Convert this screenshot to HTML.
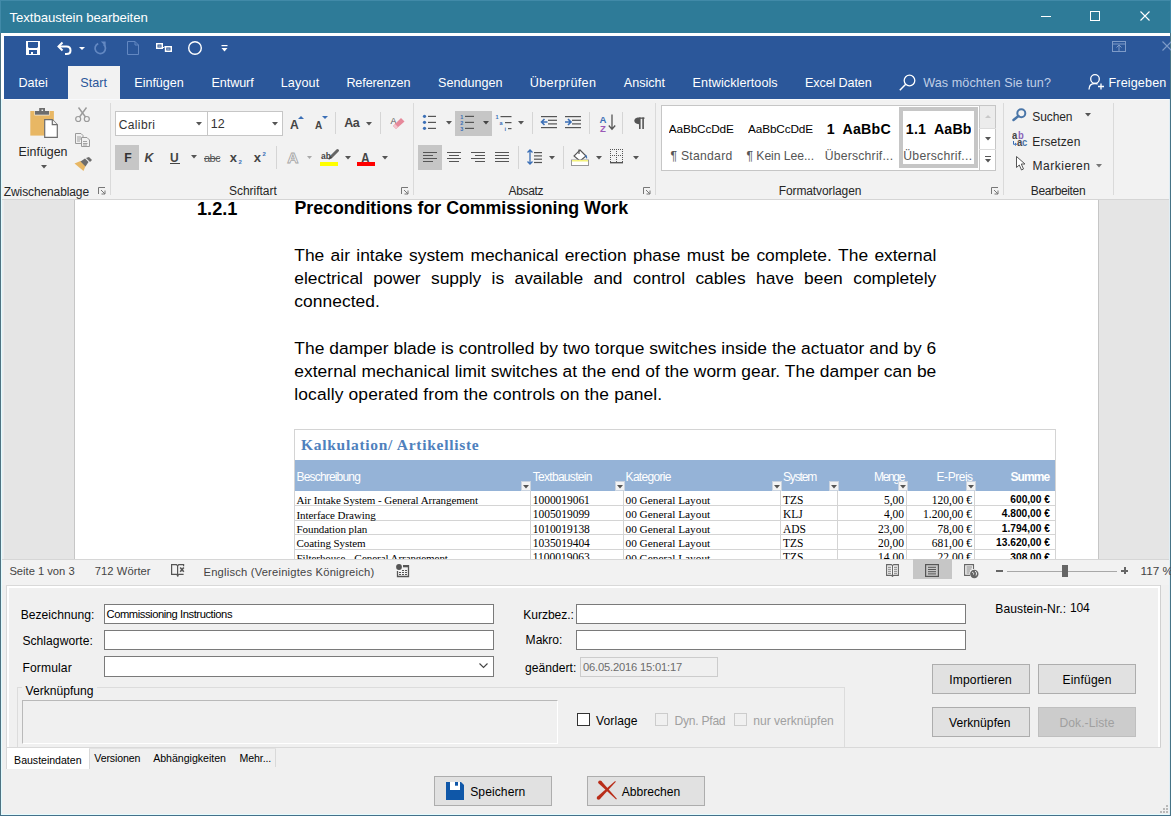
<!DOCTYPE html>
<html><head><meta charset="utf-8">
<style>
*{margin:0;padding:0;box-sizing:border-box}
html,body{width:1171px;height:816px;overflow:hidden;background:#f0f0f0;font-family:"Liberation Sans",sans-serif}
.a{position:absolute}
svg.a{overflow:visible}
.t{position:absolute;white-space:nowrap;line-height:1}
</style></head><body>
<div class="a" style="left:0px;top:0px;width:1171px;height:816px;background:#f0f0f0;"></div>
<div class="a" style="left:0px;top:0px;width:1171px;height:33px;background:#2e7b98;"></div>
<div class="a" style="left:0px;top:0px;width:1171px;height:1px;background:#418aa8;"></div>
<div class="a" style="left:0px;top:0px;width:1px;height:33px;background:#418aa8;"></div>
<div class="a" style="left:1170px;top:0px;width:1px;height:33px;background:#418aa8;"></div>
<div class="a" style="left:0px;top:33px;width:1px;height:783px;background:#4e7382;"></div>
<div class="a" style="left:1170px;top:33px;width:1px;height:783px;background:#467386;"></div>
<div class="a" style="left:0px;top:815px;width:1171px;height:1px;background:#44718a;"></div>
<div class="a" style="left:1px;top:814px;width:1169px;height:1px;background:#e4fcff;"></div>
<div class="a" style="left:1169px;top:36px;width:1px;height:779px;background:#e0eef5;"></div>
<div class="a" style="left:1px;top:33px;width:1169px;height:3px;background:#ffffff;"></div>
<div class="a" style="left:1px;top:36px;width:3px;height:63px;background:#ffffff;"></div>
<div class="a" style="left:1px;top:99px;width:1px;height:716px;background:#e0fbff;"></div>
<div class="t" style="left:9.6px;top:10.73px;font-size:13.2px;color:#fff;letter-spacing:-0.084px;">Textbaustein bearbeiten</div>
<div class="a" style="left:1041px;top:16px;width:10px;height:1px;background:#fff;"></div>
<div class="a" style="left:1090px;top:11px;width:10px;height:10px;border:1px solid #fff;"></div>
<svg class="a" style="left:1140px;top:11px;" width="10" height="10" viewBox="0 0 10 10"><path d="M0.5 0.5L9.5 9.5M9.5 0.5L0.5 9.5" stroke="#fff" stroke-width="1.1"/></svg>
<div class="a" style="left:4px;top:36px;width:1166px;height:63px;background:#2b579a;"></div>
<svg class="a" style="left:26px;top:41px;" width="14" height="14" viewBox="0 0 14 14"><rect x="0" y="0" width="14" height="14" fill="#fff"/><path d="M2 1H12V6L11 7H3L2 6Z" fill="#2b579a"/><rect x="3" y="9" width="8" height="4" fill="#2b579a"/><rect x="5" y="11" width="2" height="2" fill="#fff"/></svg>
<svg class="a" style="left:57px;top:41px;" width="15" height="14" viewBox="0 0 15 14"><path d="M2.5 5.5H9.5C12 5.5 13.5 7.3 13.5 9.5C13.5 11.7 12 13 9.5 13H8" fill="none" stroke="#fff" stroke-width="2"/><path d="M5.5 1.5L1.5 5.5L5.5 9.5" fill="none" stroke="#fff" stroke-width="2"/></svg>
<svg class="a" style="left:79px;top:47px;" width="6" height="3" viewBox="0 0 6 3"><path d="M0 0H6L3 3Z" fill="#fff"/></svg>
<svg class="a" style="left:94px;top:41px;" width="14" height="14" viewBox="0 0 14 14"><path d="M4.2 2.6A5.2 5.2 0 1 0 9.6 3.4" fill="none" stroke="#6388c2" stroke-width="1.7"/><path d="M6.8 0.6H11.6V5.2Z" fill="#6388c2"/></svg>
<svg class="a" style="left:127px;top:41px;" width="12" height="14" viewBox="0 0 12 14"><path d="M0.5 0.5H8L11.5 4V13.5H0.5Z" fill="none" stroke="#6388c2" stroke-width="1"/><path d="M8 0.5V4H11.5" fill="none" stroke="#6388c2" stroke-width="1"/></svg>
<svg class="a" style="left:156px;top:43px;" width="17" height="9" viewBox="0 0 17 9"><rect x="0" y="0" width="7" height="6" fill="#fff"/><rect x="1.5" y="1.5" width="4" height="3" fill="#274f8c"/><rect x="2.3" y="2.6" width="2.4" height="0.9" fill="#dfe7f3"/><rect x="8.8" y="3" width="7.2" height="6" fill="#fff"/><rect x="10.3" y="4.5" width="4.2" height="3" fill="#274f8c"/><rect x="11.1" y="5.6" width="2.6" height="0.9" fill="#dfe7f3"/><path d="M6.5 5L9.2 3.6" stroke="#fff" stroke-width="1"/></svg>
<svg class="a" style="left:188px;top:41px;" width="14" height="14" viewBox="0 0 14 14"><circle cx="7" cy="7" r="6.3" fill="none" stroke="#fff" stroke-width="1.4"/></svg>
<svg class="a" style="left:221px;top:45px;" width="7" height="7" viewBox="0 0 7 7"><rect x="0.5" y="0" width="6" height="1.2" fill="#fff"/><path d="M0.5 3H6.5L3.5 6.5Z" fill="#fff"/></svg>
<svg class="a" style="left:1112px;top:41px;" width="14" height="11" viewBox="0 0 14 11"><rect x="0.5" y="0.5" width="13" height="10" fill="none" stroke="#7e9bc8" stroke-width="1"/><path d="M0.5 3H13.5" stroke="#7e9bc8"/><path d="M7 4V10.5M4.5 6.5L7 4L9.5 6.5" fill="none" stroke="#7e9bc8"/></svg>
<svg class="a" style="left:1162px;top:41px;" width="10" height="10" viewBox="0 0 10 10"><path d="M0.5 0.5L9.5 9.5M9.5 0.5L0.5 9.5" stroke="#7e9bc8" stroke-width="1.1"/></svg>
<div class="a" style="left:68px;top:66px;width:52px;height:34px;background:#f2f2f2;"></div>
<div class="t" style="left:18.4px;top:77.03px;font-size:12.6px;color:#fff;letter-spacing:0.022px;">Datei</div>
<div class="t" style="left:80.2px;top:77.03px;font-size:12.6px;color:#2b579a;letter-spacing:0.041px;">Start</div>
<div class="t" style="left:134.3px;top:77.03px;font-size:12.6px;color:#fff;letter-spacing:-0.038px;">Einfügen</div>
<div class="t" style="left:211.4px;top:77.03px;font-size:12.6px;color:#fff;letter-spacing:-0.055px;">Entwurf</div>
<div class="t" style="left:280.7px;top:77.03px;font-size:12.6px;color:#fff;letter-spacing:0.151px;">Layout</div>
<div class="t" style="left:346.4px;top:77.03px;font-size:12.6px;color:#fff;letter-spacing:-0.118px;">Referenzen</div>
<div class="t" style="left:438.1px;top:77.03px;font-size:12.6px;color:#fff;letter-spacing:-0.012px;">Sendungen</div>
<div class="t" style="left:529.8px;top:77.03px;font-size:12.6px;color:#fff;letter-spacing:0.353px;">Überprüfen</div>
<div class="t" style="left:623.8px;top:77.03px;font-size:12.6px;color:#fff;letter-spacing:0.000px;">Ansicht</div>
<div class="t" style="left:692.6px;top:77.03px;font-size:12.6px;color:#fff;letter-spacing:0.075px;">Entwicklertools</div>
<div class="t" style="left:805.0px;top:77.03px;font-size:12.6px;color:#fff;letter-spacing:-0.117px;">Excel Daten</div>
<svg class="a" style="left:899px;top:74px;" width="17" height="17" viewBox="0 0 17 17"><circle cx="10.5" cy="6.5" r="5.3" fill="none" stroke="#fff" stroke-width="1.3"/><path d="M6.7 10.3L0.8 16.2" stroke="#fff" stroke-width="1.5"/></svg>
<div class="t" style="left:923.2px;top:77.03px;font-size:12.6px;color:#c0cfe6;letter-spacing:0.080px;">Was möchten Sie tun?</div>
<svg class="a" style="left:1088px;top:73px;" width="17" height="17" viewBox="0 0 17 17"><circle cx="7" cy="6" r="4.3" fill="none" stroke="#fff" stroke-width="1.3"/><path d="M1 16.5C1 12.5 3.5 10.5 7 10.5C8 10.5 9 10.7 9.7 11" fill="none" stroke="#fff" stroke-width="1.3"/><path d="M13 10.5V16.5M10 13.5H16" stroke="#fff" stroke-width="1.3"/></svg>
<div class="t" style="left:1108.5px;top:77.03px;font-size:12.6px;color:#fff;letter-spacing:0.136px;">Freigeben</div>
<div class="a" style="left:2px;top:99px;width:1167px;height:100px;background:#f2f2f2;"></div>
<div class="a" style="left:4px;top:99px;width:1165px;height:1px;background:#f8f9fb;"></div>
<div class="a" style="left:2px;top:199px;width:1167px;height:1px;background:#d5d5d5;"></div>
<div class="a" style="left:110px;top:103px;width:1px;height:92px;background:#dadada;"></div>
<div class="a" style="left:413px;top:103px;width:1px;height:92px;background:#dadada;"></div>
<div class="a" style="left:655px;top:103px;width:1px;height:92px;background:#dadada;"></div>
<div class="a" style="left:1003px;top:103px;width:1px;height:92px;background:#dadada;"></div>
<div class="a" style="left:1113px;top:103px;width:1px;height:92px;background:#dadada;"></div>
<svg class="a" style="left:30px;top:108px;" width="29" height="30" viewBox="0 0 29 30"><path d="M0.3 3H23.9V27.6H0.3Z" fill="#e8b764"/><rect x="4.5" y="2.2" width="15" height="5.2" fill="#f2f2f2"/><rect x="5" y="3" width="14" height="3.7" fill="#6d6d6d"/><rect x="9.2" y="0" width="5.8" height="4" fill="#6d6d6d"/><rect x="11.5" y="1.6" width="1.6" height="1.4" fill="#f2f2f2"/><path d="M14.7 11.7H22.3L27.3 16.7V29.3H14.7Z" fill="#fff" stroke="#6d6d6d" stroke-width="1.2"/><path d="M22.3 11.7V16.7H27.3" fill="#f2f2f2" stroke="#6d6d6d" stroke-width="1.2"/></svg>
<div class="t" style="left:18.5px;top:146.20px;font-size:12.4px;color:#262626;letter-spacing:0.012px;">Einfügen</div>
<svg class="a" style="left:41px;top:165px;" width="6" height="4" viewBox="0 0 6 4"><path d="M0 0H6L3 3.5Z" fill="#555"/></svg>
<svg class="a" style="left:75px;top:107px;" width="15" height="15" viewBox="0 0 15 15"><path d="M3.5 0.5L10.5 10M11.5 0.5L4.5 10" stroke="#9a9a9a" stroke-width="1.4"/><circle cx="3.2" cy="12" r="2.5" fill="none" stroke="#9a9a9a" stroke-width="1.2"/><circle cx="11.8" cy="12" r="2.5" fill="none" stroke="#9a9a9a" stroke-width="1.2"/></svg>
<svg class="a" style="left:75px;top:133px;" width="15" height="14" viewBox="0 0 15 14"><path d="M0.5 0.5H6L8 2.5V10.5H0.5Z" fill="#f1f1f1" stroke="#9a9a9a"/><path d="M6.5 4.5H12L14.5 7V13.5H6.5Z" fill="#f1f1f1" stroke="#9a9a9a"/><path d="M2 4H6M2 6H6M2 8H5M8 8.5H12M8 10.5H12.5M8 12H12" stroke="#9a9a9a" stroke-width="0.9"/></svg>
<svg class="a" style="left:75px;top:157px;" width="17" height="15" viewBox="0 0 17 15"><path d="M0 7.5L6 5L11 10L9 15Z" fill="#e8b764" transform="translate(-0.5,-1)"/><path d="M5.5 4.5L10 1.5L13.5 5L10.5 9.5Z" fill="#6d6d6d"/><path d="M11 1L14 0L17 3L15 5Z" fill="#6d6d6d"/></svg>
<div class="t" style="left:3.8px;top:185.54px;font-size:12px;color:#262626;letter-spacing:-0.108px;">Zwischenablage</div>
<svg class="a" style="left:98px;top:187px;" width="8" height="8" viewBox="0 0 8 8"><path d="M0.5 7V0.5H7" fill="none" stroke="#777"/><path d="M3 3L7 7M7 3.5V7H3.5" fill="none" stroke="#777"/></svg>
<div class="a" style="left:115px;top:111px;width:168px;height:25px;background:#fff;border:1px solid #c6c6c6;"></div>
<div class="a" style="left:207px;top:111px;width:1px;height:25px;background:#c6c6c6;"></div>
<div class="t" style="left:118.8px;top:118.84px;font-size:12px;color:#333;letter-spacing:0.353px;">Calibri</div>
<div class="t" style="left:210.8px;top:118.42px;font-size:12.5px;color:#333;">12</div>
<svg class="a" style="left:196px;top:122px;" width="6" height="4" viewBox="0 0 6 4"><path d="M0 0H6L3 3.5Z" fill="#555"/></svg>
<svg class="a" style="left:272px;top:122px;" width="6" height="4" viewBox="0 0 6 4"><path d="M0 0H6L3 3.5Z" fill="#555"/></svg>
<div class="t" style="left:290.0px;top:118.27px;font-size:13.5px;color:#444;font-weight:bold;transform:scaleX(0.9);transform-origin:left;">A</div>
<svg class="a" style="left:298px;top:116px;" width="6" height="3" viewBox="0 0 6 3"><path d="M0 3H6L3 0Z" fill="#3b6fb6"/></svg>
<div class="t" style="left:315.0px;top:121.23px;font-size:10px;color:#444;font-weight:bold;">A</div>
<svg class="a" style="left:322px;top:116px;" width="6" height="3" viewBox="0 0 6 3"><path d="M0 0H6L3 3Z" fill="#3b6fb6"/></svg>
<div class="a" style="left:335px;top:112px;width:1px;height:22px;background:#d5d5d5;"></div>
<div class="t" style="left:344.2px;top:117.12px;font-size:12.5px;color:#444;font-weight:bold;letter-spacing:-0.492px;">Aa</div>
<svg class="a" style="left:366px;top:122px;" width="6" height="3.5" viewBox="0 0 6 3.5"><path d="M0 0H6L3 3.5Z" fill="#555"/></svg>
<div class="a" style="left:380px;top:112px;width:1px;height:22px;background:#d5d5d5;"></div>
<div class="t" style="left:390.5px;top:117.08px;font-size:9px;color:#555;">A</div>
<svg class="a" style="left:392px;top:116px;" width="14" height="14" viewBox="0 0 14 14"><path d="M4 13L1 10L9 2L12.5 5.5Z" fill="#e6889a" transform="translate(0,0)"/><path d="M1 10L4 13L6 11L3 8Z" fill="#f3c3cc"/></svg>
<div class="a" style="left:115px;top:145px;width:24px;height:25px;background:#c6c6c6;"></div>
<div class="t" style="left:124.2px;top:151.57px;font-size:12.2px;color:#333;font-weight:bold;">F</div>
<div class="t" style="left:144.5px;top:151.57px;font-size:12.2px;color:#444;font-weight:bold;font-style:italic;">K</div>
<div class="t" style="left:170.0px;top:151.74px;font-size:12px;color:#444;font-weight:bold;">U</div>
<div class="a" style="left:170px;top:162.5px;width:9.5px;height:1.3px;background:#444;"></div>
<svg class="a" style="left:191px;top:155px;" width="6" height="3.5" viewBox="0 0 6 3.5"><path d="M0 0H6L3 3.5Z" fill="#555"/></svg>
<div class="t" style="left:204.0px;top:152.59px;font-size:11px;color:#555;letter-spacing:-0.517px;">abc</div>
<div class="a" style="left:204px;top:157.5px;width:16px;height:1px;background:#555;"></div>
<div class="t" style="left:229.8px;top:150.90px;font-size:13px;color:#444;font-weight:bold;">x</div>
<div class="t" style="left:238.5px;top:158.62px;font-size:6px;color:#3b6fb6;font-weight:bold;">2</div>
<div class="t" style="left:253.8px;top:150.90px;font-size:13px;color:#444;font-weight:bold;">x</div>
<div class="t" style="left:262.5px;top:150.62px;font-size:6px;color:#3b6fb6;font-weight:bold;">2</div>
<div class="a" style="left:276px;top:146px;width:1px;height:23px;background:#d5d5d5;"></div>
<div class="t" style="left:287.2px;top:150.08px;font-size:15.5px;color:#fafafa;font-weight:bold;-webkit-text-stroke:0.9px #a8a8a8;">A</div>
<svg class="a" style="left:307px;top:156px;" width="5" height="3" viewBox="0 0 5 3"><path d="M0 0H5L2.5 3Z" fill="#aaa"/></svg>
<div class="t" style="left:321.0px;top:152.00px;font-size:8.5px;color:#444;font-weight:bold;">ab</div>
<svg class="a" style="left:327px;top:149px;" width="12" height="12" viewBox="0 0 12 12"><path d="M10.5 1.5L4 8" stroke="#666" stroke-width="3" stroke-linecap="round" fill="none"/><path d="M3.2 7L5 8.8L1.5 11Z" fill="#444"/></svg>
<div class="a" style="left:320px;top:162px;width:18px;height:4px;background:#ffff00;"></div>
<svg class="a" style="left:345px;top:155.5px;" width="6" height="3.5" viewBox="0 0 6 3.5"><path d="M0 0H6L3 3.5Z" fill="#555"/></svg>
<div class="t" style="left:361.0px;top:150.68px;font-size:14.2px;color:#444;font-weight:bold;transform:scaleX(0.85);transform-origin:left;">A</div>
<div class="a" style="left:357px;top:162px;width:18px;height:4px;background:#ff0000;"></div>
<svg class="a" style="left:382px;top:155.5px;" width="6" height="3.5" viewBox="0 0 6 3.5"><path d="M0 0H6L3 3.5Z" fill="#555"/></svg>
<div class="t" style="left:229.0px;top:185.04px;font-size:12px;color:#262626;letter-spacing:-0.030px;">Schriftart</div>
<svg class="a" style="left:401px;top:187px;" width="8" height="8" viewBox="0 0 8 8"><path d="M0.5 7V0.5H7" fill="none" stroke="#777"/><path d="M3 3L7 7M7 3.5V7H3.5" fill="none" stroke="#777"/></svg>
<svg class="a" style="left:422px;top:114px;" width="16" height="17" viewBox="0 0 16 17"><circle cx="2.5" cy="2.3" r="1.6" fill="#3b6fb6"/><rect x="6" y="1.8" width="8" height="1.2" fill="#555"/><circle cx="2.5" cy="8.3" r="1.6" fill="#3b6fb6"/><rect x="6" y="7.8" width="8" height="1.2" fill="#555"/><circle cx="2.5" cy="14.3" r="1.6" fill="#3b6fb6"/><rect x="6" y="13.8" width="8" height="1.2" fill="#555"/></svg>
<svg class="a" style="left:446px;top:121px;" width="6" height="3.5" viewBox="0 0 6 3.5"><path d="M0 0H6L3 3.5Z" fill="#555"/></svg>
<div class="a" style="left:455px;top:111px;width:37px;height:25px;background:#c6c6c6;"></div>
<svg class="a" style="left:459px;top:114px;" width="17" height="17" viewBox="0 0 17 17"><text x="1.3" y="4.8" font-size="5.5" font-weight="bold" fill="#3b6fb6" font-family="Liberation Sans">1</text><rect x="6" y="1.8" width="9" height="1.2" fill="#555"/><text x="1.3" y="10.8" font-size="5.5" font-weight="bold" fill="#3b6fb6" font-family="Liberation Sans">2</text><rect x="6" y="7.8" width="9" height="1.2" fill="#555"/><text x="1.3" y="16.8" font-size="5.5" font-weight="bold" fill="#3b6fb6" font-family="Liberation Sans">3</text><rect x="6" y="13.8" width="9" height="1.2" fill="#555"/></svg>
<svg class="a" style="left:483px;top:121px;" width="6" height="3.5" viewBox="0 0 6 3.5"><path d="M0 0H6L3 3.5Z" fill="#444"/></svg>
<svg class="a" style="left:495px;top:114px;" width="18" height="17" viewBox="0 0 18 17"><text x="0.5" y="4.8" font-size="5.5" font-weight="bold" fill="#3b6fb6" font-family="Liberation Sans">1</text><rect x="5.5" y="2" width="11" height="1.2" fill="#555"/><text x="4.5" y="10.5" font-size="5.5" font-weight="bold" fill="#3b6fb6" font-family="Liberation Sans">a</text><rect x="10" y="8" width="6.5" height="1.2" fill="#555"/><text x="9.5" y="16.5" font-size="5.5" font-weight="bold" fill="#3b6fb6" font-family="Liberation Sans">i</text><rect x="13" y="14" width="3.5" height="1.2" fill="#555"/></svg>
<svg class="a" style="left:518px;top:121px;" width="6" height="3.5" viewBox="0 0 6 3.5"><path d="M0 0H6L3 3.5Z" fill="#555"/></svg>
<div class="a" style="left:532px;top:112px;width:1px;height:22px;background:#d5d5d5;"></div>
<svg class="a" style="left:541px;top:116px;" width="17" height="13" viewBox="0 0 17 13"><rect x="0" y="0" width="16" height="1.2" fill="#555"/><rect x="7" y="3.7" width="9" height="1.2" fill="#555"/><rect x="7" y="7.3" width="9" height="1.2" fill="#555"/><rect x="0" y="11" width="16" height="1.2" fill="#555"/><path d="M0.5 6H6.5M3.5 3L0.5 6L3.5 9" stroke="#3b6fb6" stroke-width="1.6" fill="none"/></svg>
<svg class="a" style="left:565px;top:116px;" width="17" height="13" viewBox="0 0 17 13"><rect x="0" y="0" width="16" height="1.2" fill="#555"/><rect x="7" y="3.7" width="9" height="1.2" fill="#555"/><rect x="7" y="7.3" width="9" height="1.2" fill="#555"/><rect x="0" y="11" width="16" height="1.2" fill="#555"/><path d="M0 6H6M3 3L6 6L3 9" stroke="#3b6fb6" stroke-width="1.6" fill="none"/></svg>
<div class="a" style="left:589px;top:112px;width:1px;height:22px;background:#d5d5d5;"></div>
<div class="t" style="left:599.5px;top:114.87px;font-size:9.6px;color:#3b6fb6;font-weight:bold;">A</div>
<div class="t" style="left:600.0px;top:123.57px;font-size:9.6px;color:#9b59b6;font-weight:bold;">Z</div>
<svg class="a" style="left:608px;top:114px;" width="8" height="17" viewBox="0 0 8 17"><path d="M4 0.5V15M0.8 11.5L4 15.2L7.2 11.5" stroke="#555" stroke-width="1.3" fill="none"/></svg>
<div class="a" style="left:622px;top:112px;width:1px;height:22px;background:#d5d5d5;"></div>
<svg class="a" style="left:634px;top:117px;" width="11" height="12" viewBox="0 0 11 12"><path d="M5 0.5H10.5V1.8H5Z" fill="#555"/><path d="M5 0.5C1.5 0.5 0.3 2.3 0.3 3.8C0.3 5.5 1.6 7.2 5 7.2Z" fill="#555"/><rect x="5" y="0.5" width="1.6" height="11.5" fill="#555"/><rect x="8.3" y="0.5" width="1.6" height="11.5" fill="#555"/></svg>
<div class="a" style="left:418px;top:145px;width:24px;height:25px;background:#c6c6c6;"></div>
<div class="a" style="left:423px;top:152px;width:14px;height:1.2px;background:#555;"></div>
<div class="a" style="left:423px;top:155px;width:10px;height:1.2px;background:#555;"></div>
<div class="a" style="left:423px;top:158px;width:14px;height:1.2px;background:#555;"></div>
<div class="a" style="left:423px;top:161px;width:10px;height:1.2px;background:#555;"></div>
<div class="a" style="left:447px;top:152px;width:14px;height:1.2px;background:#555;"></div>
<div class="a" style="left:449px;top:155px;width:10px;height:1.2px;background:#555;"></div>
<div class="a" style="left:447px;top:158px;width:14px;height:1.2px;background:#555;"></div>
<div class="a" style="left:449px;top:161px;width:10px;height:1.2px;background:#555;"></div>
<div class="a" style="left:471px;top:152px;width:14px;height:1.2px;background:#555;"></div>
<div class="a" style="left:475px;top:155px;width:10px;height:1.2px;background:#555;"></div>
<div class="a" style="left:471px;top:158px;width:14px;height:1.2px;background:#555;"></div>
<div class="a" style="left:475px;top:161px;width:10px;height:1.2px;background:#555;"></div>
<div class="a" style="left:495px;top:152px;width:14px;height:1.2px;background:#555;"></div>
<div class="a" style="left:495px;top:155px;width:14px;height:1.2px;background:#555;"></div>
<div class="a" style="left:495px;top:158px;width:14px;height:1.2px;background:#555;"></div>
<div class="a" style="left:495px;top:161px;width:14px;height:1.2px;background:#555;"></div>
<div class="a" style="left:518px;top:146px;width:1px;height:23px;background:#d5d5d5;"></div>
<svg class="a" style="left:527px;top:149px;" width="16" height="17" viewBox="0 0 16 17"><path d="M3 1V15M0.5 3.5L3 1L5.5 3.5M0.5 12.5L3 15L5.5 12.5" stroke="#3b6fb6" stroke-width="1.3" fill="none"/><rect x="7" y="3" width="8" height="1.2" fill="#555"/><rect x="7" y="6.3" width="8" height="1.2" fill="#555"/><rect x="7" y="9.6" width="8" height="1.2" fill="#555"/><rect x="7" y="12.9" width="8" height="1.2" fill="#555"/></svg>
<svg class="a" style="left:549px;top:156px;" width="6" height="3.5" viewBox="0 0 6 3.5"><path d="M0 0H6L3 3.5Z" fill="#555"/></svg>
<div class="a" style="left:563px;top:146px;width:1px;height:23px;background:#d5d5d5;"></div>
<svg class="a" style="left:571px;top:149px;" width="18" height="17" viewBox="0 0 18 17"><path d="M9 1L15 7L9 12L3 7Z" fill="#fff" stroke="#555" stroke-width="1.1"/><path d="M8 0.5V5" stroke="#555" stroke-width="1.2"/><path d="M14 5.5C16 6 16.5 8 16 10L14.5 8Z" fill="#3b6fb6"/><rect x="0.5" y="11" width="17" height="5.5" fill="#fff" stroke="#999" stroke-width="1"/><rect x="1" y="11" width="16" height="1.5" fill="#f3f17a"/></svg>
<svg class="a" style="left:596px;top:156px;" width="6" height="3.5" viewBox="0 0 6 3.5"><path d="M0 0H6L3 3.5Z" fill="#555"/></svg>
<svg class="a" style="left:610px;top:149px;" width="13" height="15" viewBox="0 0 13 15"><rect x="0" y="0" width="1" height="1" fill="#555"/><rect x="6" y="0" width="1" height="1" fill="#555"/><rect x="12" y="0" width="1" height="1" fill="#555"/><rect x="0" y="2" width="1" height="1" fill="#555"/><rect x="6" y="2" width="1" height="1" fill="#555"/><rect x="12" y="2" width="1" height="1" fill="#555"/><rect x="0" y="4" width="1" height="1" fill="#555"/><rect x="6" y="4" width="1" height="1" fill="#555"/><rect x="12" y="4" width="1" height="1" fill="#555"/><rect x="0" y="6" width="1" height="1" fill="#555"/><rect x="6" y="6" width="1" height="1" fill="#555"/><rect x="12" y="6" width="1" height="1" fill="#555"/><rect x="0" y="8" width="1" height="1" fill="#555"/><rect x="6" y="8" width="1" height="1" fill="#555"/><rect x="12" y="8" width="1" height="1" fill="#555"/><rect x="0" y="10" width="1" height="1" fill="#555"/><rect x="6" y="10" width="1" height="1" fill="#555"/><rect x="12" y="10" width="1" height="1" fill="#555"/><rect x="0" y="12" width="1" height="1" fill="#555"/><rect x="6" y="12" width="1" height="1" fill="#555"/><rect x="12" y="12" width="1" height="1" fill="#555"/><rect x="2" y="0" width="1" height="1" fill="#555"/><rect x="4" y="0" width="1" height="1" fill="#555"/><rect x="8" y="0" width="1" height="1" fill="#555"/><rect x="10" y="0" width="1" height="1" fill="#555"/><rect x="2" y="6" width="1" height="1" fill="#555"/><rect x="4" y="6" width="1" height="1" fill="#555"/><rect x="8" y="6" width="1" height="1" fill="#555"/><rect x="10" y="6" width="1" height="1" fill="#555"/><rect x="0" y="13" width="13" height="1.4" fill="#555"/></svg>
<svg class="a" style="left:633px;top:156px;" width="6" height="3.5" viewBox="0 0 6 3.5"><path d="M0 0H6L3 3.5Z" fill="#555"/></svg>
<div class="t" style="left:508.6px;top:185.04px;font-size:12px;color:#262626;letter-spacing:-0.379px;">Absatz</div>
<svg class="a" style="left:643px;top:187px;" width="8" height="8" viewBox="0 0 8 8"><path d="M0.5 7V0.5H7" fill="none" stroke="#777"/><path d="M3 3L7 7M7 3.5V7H3.5" fill="none" stroke="#777"/></svg>
<div class="a" style="left:661px;top:105px;width:335px;height:66px;background:#fff;border:1px solid #c6c6c6;"></div>
<div class="t" style="left:668.8px;top:123.71px;font-size:11.8px;color:#000;letter-spacing:-0.139px;width:65px;overflow:hidden;">AaBbCcDdE</div>
<div class="t" style="left:670.4px;top:149.87px;font-size:12.2px;color:#555;letter-spacing:0.278px;">¶ Standard</div>
<div class="t" style="left:748.0px;top:123.71px;font-size:11.8px;color:#000;letter-spacing:-0.139px;width:65px;overflow:hidden;">AaBbCcDdE</div>
<div class="t" style="left:746.5px;top:149.87px;font-size:12.2px;color:#555;letter-spacing:-0.056px;">¶ Kein Lee...</div>
<div class="t" style="left:826.7px;top:122.48px;font-size:14.2px;color:#000;font-weight:bold;letter-spacing:0.2px;">1&nbsp; AaBbC</div>
<div class="t" style="left:824.7px;top:149.87px;font-size:12.2px;color:#555;letter-spacing:0.222px;">Überschrif...</div>
<div class="a" style="left:899px;top:107px;width:79px;height:61px;background:#fff;border:4px solid #c6c6c6;"></div>
<div class="t" style="left:905.8px;top:122.48px;font-size:14.2px;color:#000;font-weight:bold;width:65px;overflow:hidden;letter-spacing:0.2px;">1.1&nbsp; AaBb</div>
<div class="t" style="left:903.3px;top:149.87px;font-size:12.2px;color:#555;letter-spacing:0.252px;">Überschrif...</div>
<div class="a" style="left:979px;top:105px;width:17px;height:66px;background:#fff;border:1px solid #c6c6c6;"></div>
<div class="a" style="left:980px;top:106px;width:15px;height:22px;background:#ececec;"></div>
<div class="a" style="left:979px;top:128px;width:17px;height:1px;background:#dcdcdc;"></div>
<div class="a" style="left:979px;top:149px;width:17px;height:1px;background:#dcdcdc;"></div>
<svg class="a" style="left:985px;top:115px;" width="6" height="3" viewBox="0 0 6 3"><path d="M0 3H6L3 0Z" fill="#c8c8c8"/></svg>
<svg class="a" style="left:985px;top:137px;" width="6" height="3.5" viewBox="0 0 6 3.5"><path d="M0 0H6L3 3.5Z" fill="#555"/></svg>
<div class="a" style="left:985px;top:156px;width:6px;height:1px;background:#555;"></div>
<svg class="a" style="left:985px;top:159px;" width="6" height="3.5" viewBox="0 0 6 3.5"><path d="M0 0H6L3 3.5Z" fill="#555"/></svg>
<div class="t" style="left:778.7px;top:185.04px;font-size:12px;color:#262626;letter-spacing:-0.102px;">Formatvorlagen</div>
<svg class="a" style="left:991px;top:187px;" width="8" height="8" viewBox="0 0 8 8"><path d="M0.5 7V0.5H7" fill="none" stroke="#777"/><path d="M3 3L7 7M7 3.5V7H3.5" fill="none" stroke="#777"/></svg>
<svg class="a" style="left:1012px;top:108px;" width="15" height="13" viewBox="0 0 15 13"><circle cx="9.3" cy="5.3" r="4" fill="none" stroke="#4a76a8" stroke-width="2"/><path d="M6.5 8L1.5 12" stroke="#4a76a8" stroke-width="2.5" stroke-linecap="round"/></svg>
<div class="t" style="left:1032.3px;top:110.54px;font-size:12px;color:#262626;letter-spacing:-0.098px;">Suchen</div>
<svg class="a" style="left:1085px;top:113px;" width="6" height="3.5" viewBox="0 0 6 3.5"><path d="M0 0H6L3 3.5Z" fill="#555"/></svg>
<div class="t" style="left:1011.8px;top:130.41px;font-size:10.5px;color:#444;font-weight:bold;transform:scaleX(0.9);transform-origin:left;">a</div>
<div class="t" style="left:1017.8px;top:130.41px;font-size:10.5px;color:#8a63b8;font-weight:bold;transform:scaleX(0.9);transform-origin:left;">b</div>
<div class="t" style="left:1017.0px;top:137.41px;font-size:10.5px;color:#444;font-weight:bold;transform:scaleX(0.9);transform-origin:left;">a</div>
<div class="t" style="left:1022.3px;top:137.41px;font-size:10.5px;color:#4a76a8;font-weight:bold;transform:scaleX(0.9);transform-origin:left;">c</div>
<svg class="a" style="left:1012px;top:141px;" width="5" height="5" viewBox="0 0 5 5"><path d="M1.5 0V3.3H4.5M3 2L4.5 3.3L3 4.6" stroke="#3b6fb6" stroke-width="1" fill="none"/></svg>
<div class="t" style="left:1032.3px;top:135.54px;font-size:12px;color:#262626;letter-spacing:0.095px;">Ersetzen</div>
<svg class="a" style="left:1016px;top:156px;" width="10" height="15" viewBox="0 0 10 15"><path d="M0.5 0.5V11.5L3.3 9L5.5 14L7.5 13L5.3 8H9Z" fill="#fff" stroke="#555" stroke-width="1"/></svg>
<div class="t" style="left:1032.6px;top:160.04px;font-size:12px;color:#262626;letter-spacing:0.493px;">Markieren</div>
<svg class="a" style="left:1096px;top:163.5px;" width="6" height="3.5" viewBox="0 0 6 3.5"><path d="M0 0H6L3 3.5Z" fill="#777"/></svg>
<div class="t" style="left:1030.8px;top:185.04px;font-size:12px;color:#262626;letter-spacing:-0.363px;">Bearbeiten</div>
<div class="a" style="left:2px;top:200px;width:2px;height:359px;background:#ececee;"></div>
<div class="a" style="left:4px;top:200px;width:1165px;height:359px;background:#e5e5e5;"></div>
<div class="a" style="left:74px;top:200px;width:1025px;height:359px;background:#fff;"></div>
<div class="a" style="left:74px;top:200px;width:1px;height:359px;background:#c6c6c6;"></div>
<div class="a" style="left:1098px;top:200px;width:1px;height:359px;background:#c6c6c6;"></div>
<div class="t" style="left:196.9px;top:199.99px;font-size:18.2px;color:#000;font-weight:bold;letter-spacing:0.036px;">1.2.1</div>
<div class="t" style="left:294.5px;top:200.33px;font-size:17.8px;color:#000;font-weight:bold;letter-spacing:-0.028px;">Preconditions for Commissioning Work</div>
<div class="t" style="left:294.3px;top:246.87px;font-size:17.4px;color:#000;">The</div>
<div class="t" style="left:330.6px;top:246.87px;font-size:17.4px;color:#000;">air</div>
<div class="t" style="left:356.3px;top:246.87px;font-size:17.4px;color:#000;">intake</div>
<div class="t" style="left:409.0px;top:246.87px;font-size:17.4px;color:#000;">system</div>
<div class="t" style="left:470.4px;top:246.87px;font-size:17.4px;color:#000;">mechanical</div>
<div class="t" style="left:564.7px;top:246.87px;font-size:17.4px;color:#000;">erection</div>
<div class="t" style="left:633.0px;top:246.87px;font-size:17.4px;color:#000;">phase</div>
<div class="t" style="left:686.7px;top:246.87px;font-size:17.4px;color:#000;">must</div>
<div class="t" style="left:730.7px;top:246.87px;font-size:17.4px;color:#000;">be</div>
<div class="t" style="left:756.4px;top:246.87px;font-size:17.4px;color:#000;">complete.</div>
<div class="t" style="left:838.1px;top:246.87px;font-size:17.4px;color:#000;">The</div>
<div class="t" style="left:874.4px;top:246.87px;font-size:17.4px;color:#000;">external</div>
<div class="t" style="left:294.3px;top:269.57px;font-size:17.4px;color:#000;">electrical</div>
<div class="t" style="left:373.3px;top:269.57px;font-size:17.4px;color:#000;">power</div>
<div class="t" style="left:431.0px;top:269.57px;font-size:17.4px;color:#000;">supply</div>
<div class="t" style="left:491.6px;top:269.57px;font-size:17.4px;color:#000;">is</div>
<div class="t" style="left:514.5px;top:269.57px;font-size:17.4px;color:#000;">available</div>
<div class="t" style="left:593.5px;top:269.57px;font-size:17.4px;color:#000;">and</div>
<div class="t" style="left:632.9px;top:269.57px;font-size:17.4px;color:#000;">control</div>
<div class="t" style="left:695.4px;top:269.57px;font-size:17.4px;color:#000;">cables</div>
<div class="t" style="left:756.1px;top:269.57px;font-size:17.4px;color:#000;">have</div>
<div class="t" style="left:804.1px;top:269.57px;font-size:17.4px;color:#000;">been</div>
<div class="t" style="left:853.2px;top:269.57px;font-size:17.4px;color:#000;">completely</div>
<div class="t" style="left:294.3px;top:293.17px;font-size:17.4px;color:#000;letter-spacing:0.053px;">connected.</div>
<div class="t" style="left:294.3px;top:339.87px;font-size:17.4px;color:#000;letter-spacing:0.049px;">The damper blade is controlled by two torque switches inside the actuator and by 6</div>
<div class="t" style="left:294.3px;top:362.77px;font-size:17.4px;color:#000;letter-spacing:0.042px;">external mechanical limit switches at the end of the worm gear. The damper can be</div>
<div class="t" style="left:294.3px;top:385.77px;font-size:17.4px;color:#000;letter-spacing:0.135px;">locally operated from the controls on the panel.</div>
<div class="a" style="left:294px;top:429px;width:762px;height:130px;background:#fff;"></div>
<div class="a" style="left:294px;top:429px;width:762px;height:1px;background:#d4d4d4;"></div>
<div class="a" style="left:294px;top:429px;width:1px;height:130px;background:#d4d4d4;"></div>
<div class="a" style="left:1055px;top:429px;width:1px;height:130px;background:#d4d4d4;"></div>
<div class="t" style="left:301.0px;top:437.38px;font-size:15.5px;color:#4f81bd;font-weight:bold;font-family:'Liberation Serif',serif;letter-spacing:0.714px;">Kalkulation/ Artikelliste</div>
<div class="a" style="left:295px;top:460px;width:760px;height:31px;background:#95b3d7;"></div>
<div class="t" style="left:296.5px;top:471.14px;font-size:12px;color:#fff;letter-spacing:-0.823px;">Beschreibung</div>
<div class="t" style="left:532.7px;top:471.14px;font-size:12px;color:#fff;letter-spacing:-0.697px;">Textbaustein</div>
<div class="t" style="left:625.6px;top:471.14px;font-size:12px;color:#fff;letter-spacing:-0.707px;">Kategorie</div>
<div class="t" style="left:783.0px;top:471.14px;font-size:12px;color:#fff;letter-spacing:-1.167px;">System</div>
<div class="t" style="left:874.0px;top:471.14px;font-size:12px;color:#fff;letter-spacing:-1.337px;">Menge</div>
<div class="t" style="left:936.6px;top:471.14px;font-size:12px;color:#fff;letter-spacing:-0.478px;">E-Preis</div>
<div class="t" style="left:1010.4px;top:471.14px;font-size:12px;color:#fff;font-weight:bold;letter-spacing:-0.869px;">Summe</div>
<div class="a" style="left:521px;top:481px;width:10px;height:10px;background:#f3f3f3;border:1px solid #c9d3e0;"></div>
<svg class="a" style="left:523px;top:484.5px;" width="6" height="3.5" viewBox="0 0 6 3.5"><path d="M0 0H6L3 3.5Z" fill="#555"/></svg>
<div class="a" style="left:615px;top:481px;width:10px;height:10px;background:#f3f3f3;border:1px solid #c9d3e0;"></div>
<svg class="a" style="left:617px;top:484.5px;" width="6" height="3.5" viewBox="0 0 6 3.5"><path d="M0 0H6L3 3.5Z" fill="#555"/></svg>
<div class="a" style="left:772px;top:481px;width:10px;height:10px;background:#f3f3f3;border:1px solid #c9d3e0;"></div>
<svg class="a" style="left:774px;top:484.5px;" width="6" height="3.5" viewBox="0 0 6 3.5"><path d="M0 0H6L3 3.5Z" fill="#555"/></svg>
<div class="a" style="left:829px;top:481px;width:10px;height:10px;background:#f3f3f3;border:1px solid #c9d3e0;"></div>
<svg class="a" style="left:831px;top:484.5px;" width="6" height="3.5" viewBox="0 0 6 3.5"><path d="M0 0H6L3 3.5Z" fill="#555"/></svg>
<div class="a" style="left:898px;top:481px;width:10px;height:10px;background:#f3f3f3;border:1px solid #c9d3e0;"></div>
<svg class="a" style="left:900px;top:484.5px;" width="6" height="3.5" viewBox="0 0 6 3.5"><path d="M0 0H6L3 3.5Z" fill="#555"/></svg>
<div class="a" style="left:966px;top:481px;width:10px;height:10px;background:#f3f3f3;border:1px solid #c9d3e0;"></div>
<svg class="a" style="left:968px;top:484.5px;" width="6" height="3.5" viewBox="0 0 6 3.5"><path d="M0 0H6L3 3.5Z" fill="#555"/></svg>
<div class="a" style="left:295px;top:505px;width:760px;height:1px;background:#d4d4d4;"></div>
<div class="t" style="left:296.5px;top:495.19px;font-size:11px;color:#000;font-family:'Liberation Serif',serif;letter-spacing:-0.071px;">Air Intake System - General Arrangement</div>
<div class="t" style="left:532.8px;top:494.77px;font-size:11.5px;color:#000;font-family:'Liberation Serif',serif;letter-spacing:-0.050px;">1000019061</div>
<div class="t" style="left:625.5px;top:494.93px;font-size:11.3px;color:#000;font-family:'Liberation Serif',serif;">00 General Layout</div>
<div class="t" style="left:783.0px;top:494.77px;font-size:11.5px;color:#000;font-family:'Liberation Serif',serif;">TZS</div>
<div class="t" style="left:883.9px;top:494.77px;font-size:11.5px;color:#000;font-family:'Liberation Serif',serif;">5,00</div>
<div class="t" style="left:931.8px;top:494.77px;font-size:11.5px;color:#000;font-family:'Liberation Serif',serif;">120,00 €</div>
<div class="t" style="left:1010.3px;top:495.07px;font-size:10.2px;color:#000;font-weight:bold;">600,00 €</div>
<div class="a" style="left:295px;top:520px;width:760px;height:1px;background:#d4d4d4;"></div>
<div class="t" style="left:296.5px;top:509.59px;font-size:11px;color:#000;font-family:'Liberation Serif',serif;letter-spacing:-0.071px;">Interface Drawing</div>
<div class="t" style="left:532.8px;top:509.17px;font-size:11.5px;color:#000;font-family:'Liberation Serif',serif;letter-spacing:-0.050px;">1005019099</div>
<div class="t" style="left:625.5px;top:509.33px;font-size:11.3px;color:#000;font-family:'Liberation Serif',serif;">00 General Layout</div>
<div class="t" style="left:783.0px;top:509.17px;font-size:11.5px;color:#000;font-family:'Liberation Serif',serif;">KLJ</div>
<div class="t" style="left:883.9px;top:509.17px;font-size:11.5px;color:#000;font-family:'Liberation Serif',serif;">4,00</div>
<div class="t" style="left:923.1px;top:509.17px;font-size:11.5px;color:#000;font-family:'Liberation Serif',serif;">1.200,00 €</div>
<div class="t" style="left:1001.8px;top:509.47px;font-size:10.2px;color:#000;font-weight:bold;">4.800,00 €</div>
<div class="a" style="left:295px;top:534px;width:760px;height:1px;background:#d4d4d4;"></div>
<div class="t" style="left:296.5px;top:523.99px;font-size:11px;color:#000;font-family:'Liberation Serif',serif;letter-spacing:-0.072px;">Foundation plan</div>
<div class="t" style="left:532.8px;top:523.57px;font-size:11.5px;color:#000;font-family:'Liberation Serif',serif;letter-spacing:-0.050px;">1010019138</div>
<div class="t" style="left:625.5px;top:523.73px;font-size:11.3px;color:#000;font-family:'Liberation Serif',serif;">00 General Layout</div>
<div class="t" style="left:783.0px;top:523.57px;font-size:11.5px;color:#000;font-family:'Liberation Serif',serif;">ADS</div>
<div class="t" style="left:878.1px;top:523.57px;font-size:11.5px;color:#000;font-family:'Liberation Serif',serif;">23,00</div>
<div class="t" style="left:937.5px;top:523.57px;font-size:11.5px;color:#000;font-family:'Liberation Serif',serif;">78,00 €</div>
<div class="t" style="left:1001.8px;top:523.87px;font-size:10.2px;color:#000;font-weight:bold;">1.794,00 €</div>
<div class="a" style="left:295px;top:549px;width:760px;height:1px;background:#d4d4d4;"></div>
<div class="t" style="left:296.5px;top:538.39px;font-size:11px;color:#000;font-family:'Liberation Serif',serif;letter-spacing:-0.075px;">Coating System</div>
<div class="t" style="left:532.8px;top:537.97px;font-size:11.5px;color:#000;font-family:'Liberation Serif',serif;letter-spacing:-0.050px;">1035019404</div>
<div class="t" style="left:625.5px;top:538.13px;font-size:11.3px;color:#000;font-family:'Liberation Serif',serif;">00 General Layout</div>
<div class="t" style="left:783.0px;top:537.97px;font-size:11.5px;color:#000;font-family:'Liberation Serif',serif;">TZS</div>
<div class="t" style="left:878.1px;top:537.97px;font-size:11.5px;color:#000;font-family:'Liberation Serif',serif;">20,00</div>
<div class="t" style="left:931.8px;top:537.97px;font-size:11.5px;color:#000;font-family:'Liberation Serif',serif;">681,00 €</div>
<div class="t" style="left:996.1px;top:538.27px;font-size:10.2px;color:#000;font-weight:bold;">13.620,00 €</div>
<div class="a" style="left:295px;top:563px;width:760px;height:1px;background:#d4d4d4;"></div>
<div class="t" style="left:296.5px;top:552.79px;font-size:11px;color:#000;font-family:'Liberation Serif',serif;letter-spacing:-0.070px;">Filterhouse - General Arrangement</div>
<div class="t" style="left:532.8px;top:552.37px;font-size:11.5px;color:#000;font-family:'Liberation Serif',serif;letter-spacing:-0.008px;">1100019063</div>
<div class="t" style="left:625.5px;top:552.53px;font-size:11.3px;color:#000;font-family:'Liberation Serif',serif;">00 General Layout</div>
<div class="t" style="left:783.0px;top:552.37px;font-size:11.5px;color:#000;font-family:'Liberation Serif',serif;">TZS</div>
<div class="t" style="left:878.1px;top:552.37px;font-size:11.5px;color:#000;font-family:'Liberation Serif',serif;">14,00</div>
<div class="t" style="left:937.5px;top:552.37px;font-size:11.5px;color:#000;font-family:'Liberation Serif',serif;">22,00 €</div>
<div class="t" style="left:1010.3px;top:552.67px;font-size:10.2px;color:#000;font-weight:bold;">308,00 €</div>
<div class="a" style="left:530px;top:491px;width:1px;height:68px;background:#d4d4d4;"></div>
<div class="a" style="left:623px;top:491px;width:1px;height:68px;background:#d4d4d4;"></div>
<div class="a" style="left:780px;top:491px;width:1px;height:68px;background:#d4d4d4;"></div>
<div class="a" style="left:837px;top:491px;width:1px;height:68px;background:#d4d4d4;"></div>
<div class="a" style="left:906px;top:491px;width:1px;height:68px;background:#d4d4d4;"></div>
<div class="a" style="left:974px;top:491px;width:1px;height:68px;background:#d4d4d4;"></div>
<div class="a" style="left:2px;top:559px;width:1167px;height:26px;background:#f2f2f2;"></div>
<div class="a" style="left:2px;top:559px;width:1167px;height:1px;background:#d6d6d6;"></div>
<div class="t" style="left:9.4px;top:565.92px;font-size:11.2px;color:#444;letter-spacing:-0.007px;">Seite 1 von 3</div>
<div class="t" style="left:94.8px;top:565.92px;font-size:11.2px;color:#444;letter-spacing:0.049px;">712 Wörter</div>
<svg class="a" style="left:171px;top:564px;" width="14" height="14" viewBox="0 0 14 14"><path d="M0.6 0.6H5.5L6.6 1.8V11.5L5.5 10.4H0.6Z" fill="none" stroke="#555" stroke-width="1.2"/><path d="M6.6 1.8L7.7 0.6H12.6V2.2M6.6 11.5L7.7 10.4H12.6" fill="none" stroke="#555" stroke-width="1.2"/><path d="M6.6 11V12.5" stroke="#555" stroke-width="1.2"/><path d="M9.2 3.6L12.8 7.8M12.8 3.6L9.2 7.8" stroke="#555" stroke-width="1.6"/></svg>
<div class="t" style="left:203.5px;top:566.72px;font-size:11.2px;color:#444;letter-spacing:0.203px;">Englisch (Vereinigtes Königreich)</div>
<svg class="a" style="left:396px;top:563px;" width="14" height="15" viewBox="0 0 14 15"><circle cx="3" cy="4" r="2.9" fill="#555"/><rect x="7" y="2" width="6" height="2.3" fill="#555"/><path d="M12.5 2V13.5H1.5V8" fill="none" stroke="#555" stroke-width="1.3"/><path d="M6 7.5H8M9 7.5H11M3 9.5H5M6 9.5H8M9 9.5H11M3 11.5H5M6 11.5H8M9 11.5H11" stroke="#555" stroke-width="1.1"/></svg>
<svg class="a" style="left:886px;top:564px;" width="13" height="13" viewBox="0 0 13 13"><path d="M0.6 0.6H5.3L6.5 1.6L7.7 0.6H12.4V11.4H7.7L6.5 12.4L5.3 11.4H0.6Z" fill="none" stroke="#666" stroke-width="1.1"/><path d="M6.5 1.6V12.4" stroke="#666" stroke-width="1"/><path d="M2 3.3H5M2 5.3H5M2 7.3H5M2 9.3H5M8 3.3H11M8 5.3H11M8 7.3H11M8 9.3H11" stroke="#777" stroke-width="0.9"/></svg>
<div class="a" style="left:913px;top:559px;width:39px;height:20px;background:#c6c6c6;"></div>
<svg class="a" style="left:925px;top:564px;" width="14" height="13" viewBox="0 0 14 13"><rect x="0.6" y="0.6" width="12.8" height="11.8" fill="none" stroke="#555" stroke-width="1.2"/><path d="M3 3.3H11M3 5.5H11M3 7.7H11M3 9.9H11" stroke="#555" stroke-width="1"/></svg>
<svg class="a" style="left:964px;top:564px;" width="15" height="15" viewBox="0 0 15 15"><path d="M9.5 5V0.6H0.6V11.4H6" fill="none" stroke="#666" stroke-width="1.1"/><path d="M2.5 3H8M2.5 5H7.5M2.5 7H6M2.5 9H5.5" stroke="#777" stroke-width="0.9"/><circle cx="10.3" cy="10" r="4.2" fill="#666"/><path d="M8 8.5C9 8 10 9 9.5 10.5M11 7C12.5 8 13 9.5 12 11.5" stroke="#f2f2f2" stroke-width="1" fill="none"/></svg>
<div class="a" style="left:996px;top:570px;width:7px;height:2px;background:#666;"></div>
<div class="a" style="left:1007px;top:571px;width:110px;height:1px;background:#a8a8a8;"></div>
<div class="a" style="left:1062px;top:565px;width:6px;height:12px;background:#666;"></div>
<div class="a" style="left:1121px;top:570px;width:7px;height:2px;background:#666;"></div>
<div class="a" style="left:1123.5px;top:567px;width:2px;height:7px;background:#666;"></div>
<div class="t" style="left:1140.5px;top:565.71px;font-size:11.8px;color:#444;">117 %</div>
<div class="a" style="left:6px;top:585px;width:1155px;height:163px;background:#f0f0f0;"></div>
<div class="a" style="left:6px;top:585px;width:1155px;height:1px;background:#d9d9d9;"></div>
<div class="a" style="left:6px;top:585px;width:1px;height:162px;background:#d9d9d9;"></div>
<div class="a" style="left:7px;top:586px;width:1153px;height:2px;background:#ffffff;"></div>
<div class="a" style="left:7px;top:586px;width:2px;height:161px;background:#ffffff;"></div>
<div class="a" style="left:1160px;top:585px;width:1px;height:162px;background:#d0d0d0;"></div>
<div class="a" style="left:1158px;top:586px;width:2px;height:161px;background:#ffffff;"></div>
<div class="a" style="left:6px;top:747px;width:1155px;height:1px;background:#d9d9d9;"></div>
<div class="t" style="left:20.7px;top:609.46px;font-size:12.1px;color:#000;letter-spacing:0.030px;">Bezeichnung:</div>
<div class="t" style="left:22.4px;top:634.56px;font-size:12.1px;color:#000;letter-spacing:0.044px;">Schlagworte:</div>
<div class="t" style="left:22.4px;top:662.46px;font-size:12.1px;color:#000;letter-spacing:0.141px;">Formular</div>
<div class="a" style="left:104px;top:604px;width:390px;height:20px;background:#fff;border:1px solid #7a7a7a;"></div>
<div class="t" style="left:106.5px;top:609.22px;font-size:11.2px;color:#000;letter-spacing:-0.432px;">Commissioning Instructions</div>
<div class="a" style="left:104px;top:630px;width:390px;height:20px;background:#fff;border:1px solid #7a7a7a;"></div>
<div class="a" style="left:104px;top:656px;width:390px;height:21px;background:#fff;border:1px solid #7a7a7a;"></div>
<svg class="a" style="left:479px;top:663px;" width="10" height="6" viewBox="0 0 10 6"><path d="M0.5 0.5L4.5 4.5L8.5 0.5" fill="none" stroke="#444" stroke-width="1.1"/></svg>
<div class="t" style="left:523.2px;top:609.46px;font-size:12.1px;color:#000;letter-spacing:-0.040px;">Kurzbez.:</div>
<div class="a" style="left:576px;top:604px;width:390px;height:20px;background:#fff;border:1px solid #7a7a7a;"></div>
<div class="t" style="left:525.6px;top:634.46px;font-size:12.1px;color:#000;letter-spacing:-0.026px;">Makro:</div>
<div class="a" style="left:576px;top:630px;width:390px;height:20px;background:#fff;border:1px solid #7a7a7a;"></div>
<div class="t" style="left:524.9px;top:662.46px;font-size:12.1px;color:#000;letter-spacing:0.037px;">geändert:</div>
<div class="a" style="left:580px;top:657px;width:138px;height:20px;background:#f0f0f0;border:1px solid #cccccc;"></div>
<div class="t" style="left:583.0px;top:661.52px;font-size:11.2px;color:#6d6d6d;letter-spacing:-0.190px;">06.05.2016 15:01:17</div>
<div class="t" style="left:995.3px;top:603.16px;font-size:12.1px;color:#000;letter-spacing:0.079px;">Baustein-Nr.:</div>
<div class="t" style="left:1070.0px;top:601.96px;font-size:12.1px;color:#000;letter-spacing:-0.285px;">104</div>
<div class="a" style="left:932px;top:664px;width:98px;height:30px;background:#e1e1e1;border:1px solid #adadad;"></div>
<div class="t" style="left:949.3px;top:674.16px;font-size:12.1px;color:#000;letter-spacing:0.124px;">Importieren</div>
<div class="a" style="left:1038px;top:664px;width:98px;height:30px;background:#e1e1e1;border:1px solid #adadad;"></div>
<div class="t" style="left:1062.5px;top:674.16px;font-size:12.1px;color:#000;letter-spacing:0.162px;">Einfügen</div>
<div class="a" style="left:932px;top:707px;width:98px;height:30px;background:#e1e1e1;border:1px solid #adadad;"></div>
<div class="t" style="left:949.0px;top:717.16px;font-size:12.1px;color:#000;letter-spacing:0.036px;">Verknüpfen</div>
<div class="a" style="left:1038px;top:707px;width:98px;height:30px;background:#cccccc;border:1px solid #bfbfbf;"></div>
<div class="t" style="left:1059.5px;top:717.16px;font-size:12.1px;color:#a0a0a0;letter-spacing:0.058px;">Dok.-Liste</div>
<div class="a" style="left:17px;top:687px;width:828px;height:60px;border:1px solid #dcdcdc;border-bottom:none;"></div>
<div class="a" style="left:22px;top:680px;width:75px;height:12px;background:#f0f0f0;"></div>
<div class="t" style="left:25.6px;top:684.56px;font-size:12.1px;color:#000;letter-spacing:0.004px;">Verknüpfung</div>
<div class="a" style="left:22px;top:700px;width:536px;height:44px;background:#f0f0f0;border:1px solid #b9b9b9;border-right-color:#fff;border-bottom-color:#fff;"></div>
<div class="a" style="left:577px;top:713px;width:13px;height:13px;background:#fff;border:1px solid #333;"></div>
<div class="t" style="left:596.0px;top:714.96px;font-size:12.1px;color:#000;letter-spacing:0.088px;">Vorlage</div>
<div class="a" style="left:655px;top:713px;width:13px;height:13px;background:#f0f0f0;border:1px solid #cccccc;"></div>
<div class="t" style="left:674.5px;top:714.96px;font-size:12.1px;color:#a0a0a0;letter-spacing:-0.253px;">Dyn. Pfad</div>
<div class="a" style="left:734px;top:713px;width:13px;height:13px;background:#f0f0f0;border:1px solid #cccccc;"></div>
<div class="t" style="left:753.2px;top:714.96px;font-size:12.1px;color:#a0a0a0;letter-spacing:-0.002px;">nur verknüpfen</div>
<div class="a" style="left:7px;top:748px;width:82px;height:21px;background:#ffffff;"></div>
<div class="a" style="left:6px;top:747px;width:1px;height:22px;background:#d9d9d9;"></div>
<div class="t" style="left:14.1px;top:755.03px;font-size:10.6px;color:#000;letter-spacing:-0.025px;">Bausteindaten</div>
<div class="a" style="left:89px;top:749px;width:58px;height:18px;background:#f0f0f0;border-right:1px solid #d9d9d9;"></div>
<div class="t" style="left:94.3px;top:753.03px;font-size:10.6px;color:#000;letter-spacing:-0.114px;">Versionen</div>
<div class="a" style="left:146px;top:749px;width:87px;height:18px;background:#f0f0f0;border-right:1px solid #d9d9d9;"></div>
<div class="t" style="left:153.2px;top:753.03px;font-size:10.6px;color:#000;letter-spacing:-0.017px;">Abhängigkeiten</div>
<div class="a" style="left:232px;top:749px;width:44px;height:18px;background:#f0f0f0;border-right:1px solid #d9d9d9;"></div>
<div class="t" style="left:239.6px;top:753.03px;font-size:10.6px;color:#000;letter-spacing:-0.125px;">Mehr...</div>
<div class="a" style="left:89px;top:748px;width:1px;height:21px;background:#d9d9d9;"></div>
<div class="a" style="left:89px;top:748px;width:187px;height:1px;background:#e3e3e3;"></div>
<div class="a" style="left:1166px;top:805px;width:2px;height:2px;background:#b9b9b9;"></div>
<div class="a" style="left:1163px;top:808px;width:2px;height:2px;background:#b9b9b9;"></div>
<div class="a" style="left:1166px;top:808px;width:2px;height:2px;background:#b9b9b9;"></div>
<div class="a" style="left:1160px;top:811px;width:2px;height:2px;background:#b9b9b9;"></div>
<div class="a" style="left:1163px;top:811px;width:2px;height:2px;background:#b9b9b9;"></div>
<div class="a" style="left:1166px;top:811px;width:2px;height:2px;background:#b9b9b9;"></div>
<div class="a" style="left:434px;top:776px;width:118px;height:30px;background:#e1e1e1;border:1px solid #adadad;"></div>
<svg class="a" style="left:446px;top:782px;" width="18" height="18" viewBox="0 0 18 18"><path d="M0 0H15L18 3V18H0Z" fill="#0f57a8"/><rect x="4" y="0" width="10" height="8" fill="#fff"/><rect x="9" y="0" width="3" height="3.7" fill="#0f57a8"/></svg>
<div class="t" style="left:470.2px;top:786.16px;font-size:12.1px;color:#000;letter-spacing:0.086px;">Speichern</div>
<div class="a" style="left:587px;top:776px;width:118px;height:30px;background:#e1e1e1;border:1px solid #adadad;"></div>
<svg class="a" style="left:596px;top:779px;" width="22" height="23" viewBox="0 0 22 23"><path d="M5.29 2.04L20.86 19.85L20.14 20.55L2.71 4.56Z" fill="#b92d19"/><circle cx="4" cy="3.3" r="1.8" fill="#b92d19"/><path d="M3.76 20.28L19.85 2.66L19.15 1.94L1.24 17.72Z" fill="#b92d19"/><circle cx="2.5" cy="19" r="1.8" fill="#b92d19"/></svg>
<div class="t" style="left:621.7px;top:786.16px;font-size:12.1px;color:#000;letter-spacing:-0.006px;">Abbrechen</div>
</body></html>
